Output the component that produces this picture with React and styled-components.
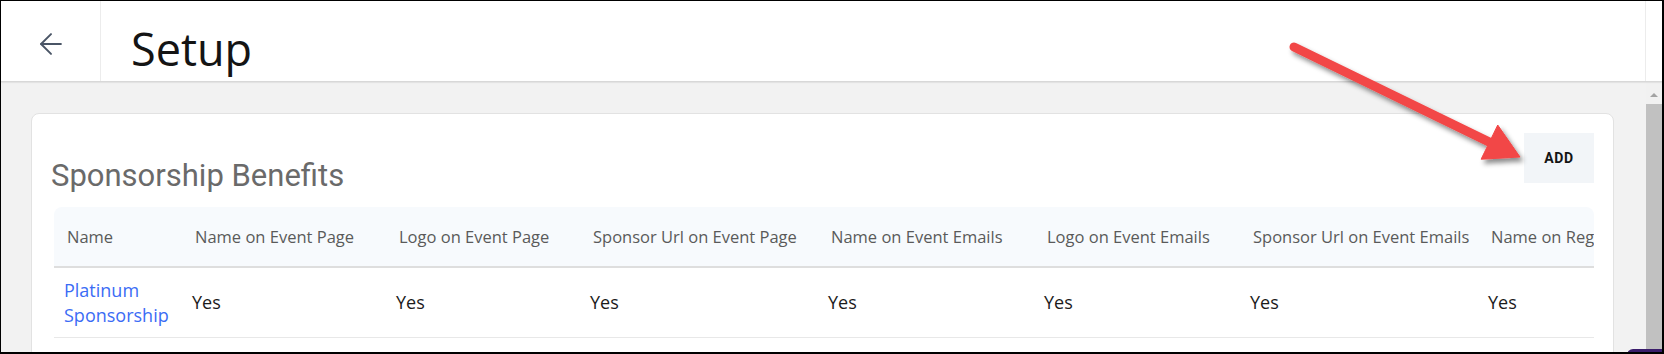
import React from 'react';
import styled, { createGlobalStyle } from 'styled-components';
import { ArrowLeft } from 'lucide-react';

const GlobalStyle = createGlobalStyle`
  html, body { margin: 0; padding: 0; background: #fff; }
  body { font-family: "Open Sans", "Noto Sans", sans-serif; }
  *, *::before, *::after { box-sizing: border-box; }
`;

const Frame = styled.div`
  position: relative;
  width: 1664px;
  height: 354px;
  border-style: solid;
  border-color: #000;
  border-width: 1px 2px 2px 1px;
  overflow: hidden;
  display: flex;
  flex-direction: column;
  background: #f2f2f2;
`;

const TopBar = styled.header`
  flex: none;
  height: 81px;
  display: flex;
  align-items: stretch;
  background: #fff;
  border-bottom: 1px solid #d8d8d8;
  box-shadow: 0 1px 1px rgba(0, 0, 0, 0.06);
  position: relative;
  z-index: 1;
`;

const BackCell = styled.button`
  flex: none;
  width: 100px;
  border: none;
  border-right: 1px solid #ececec;
  background: #fff;
  display: flex;
  align-items: center;
  justify-content: center;
  padding: 5px 0 0 0;
  color: #4a5566;
  cursor: pointer;
`;

const PageTitle = styled.h1`
  margin: 25px 0 0 30px;
  font-family: "Open Sans", sans-serif;
  font-weight: 400;
  font-size: 45px;
  line-height: 45px;
  color: #141414;
`;

const TopSpacer = styled.div`
  flex: 1;
  border-right: 1px solid #ececec;
`;

const TopEnd = styled.div`
  flex: none;
  width: 16px;
`;

const Main = styled.div`
  flex: 1;
  min-height: 0;
  display: flex;
`;

const Content = styled.main`
  flex: 1;
  min-width: 0;
  padding: 31px 32px 0 30px;
  overflow: hidden;
`;

const Card = styled.section`
  background: #fff;
  border: 1px solid #e2e2e2;
  border-radius: 8px;
  padding: 19px 19px 0 22px;
  min-height: 320px;
`;

const CardHeader = styled.div`
  display: flex;
  justify-content: space-between;
  align-items: flex-start;
  height: 59px;
`;

const CardTitle = styled.h2`
  margin: 25px 0 0 -3px;
  font-family: Roboto, "Noto Sans", sans-serif;
  font-weight: 400;
  font-size: 31px;
  line-height: 36px;
  color: #6a6a6a;
`;

const AddButton = styled.button`
  width: 70px;
  height: 50px;
  border: none;
  background: #f2f5f8;
  font-family: Roboto, "Noto Sans", sans-serif;
  font-weight: 700;
  font-size: 14px;
  letter-spacing: 0.7px;
  color: #141414;
  cursor: pointer;
`;

const TableWrap = styled.div`
  margin-top: 15px;
  overflow: hidden;
  border-radius: 8px 8px 0 0;
`;

const Grid = styled.div`
  display: grid;
  grid-template-columns: ${(p) => p.$cols.map((w) => `${w}px`).join(' ')};
  width: max-content;
`;

const HeadCell = styled.div`
  height: 61px;
  display: flex;
  align-items: center;
  padding: 0 8px 0 13px;
  background: #f7fafd;
  border-bottom: 2px solid #dedede;
  font-size: 16.5px;
  color: #5a5a5a;
  white-space: nowrap;
  overflow: hidden;
`;

const BodyCell = styled.div`
  height: 70px;
  display: flex;
  align-items: center;
  padding: 0 6px 0 10px;
  border-bottom: 1px solid #e8e8e8;
  font-size: 18px;
  line-height: 25px;
  color: #1b1b1b;
`;

const NameLink = styled.a`
  color: #3b6cf5;
  text-decoration: none;
`;

const Scrollbar = styled.div`
  flex: none;
  width: 16px;
  background: #f1f1f1;
  display: flex;
  flex-direction: column;
`;

const ScrollButton = styled.div`
  flex: none;
  height: 22px;
  display: flex;
  justify-content: center;
  padding-top: 11px;
  &::before {
    content: '';
    width: 0;
    height: 0;
    border-left: 4px solid transparent;
    border-right: 4px solid transparent;
    border-bottom: 4px solid #a3a3a3;
  }
`;

const ScrollThumb = styled.div`
  flex: 1;
  background: #c1c1c1;
`;

const Annotation = styled.svg`
  position: absolute;
  left: -1px;
  top: -1px;
  width: 1664px;
  height: 354px;
  pointer-events: none;
  z-index: 5;
`;

const ChatPeek = styled.div`
  position: absolute;
  left: 1626px;
  top: 348px;
  width: 40px;
  height: 6px;
  background: #3a1d6b;
  border-radius: 6px 0 0 0;
  z-index: 6;
`;

const columns = [
  { label: 'Name', width: 128 },
  { label: 'Name on Event Page', width: 204 },
  { label: 'Logo on Event Page', width: 194 },
  { label: 'Sponsor Url on Event Page', width: 238 },
  { label: 'Name on Event Emails', width: 216 },
  { label: 'Logo on Event Emails', width: 206 },
  { label: 'Sponsor Url on Event Emails', width: 238 },
  { label: 'Name on Registration Page', width: 240 },
];

const rows = [
  { name: 'Platinum Sponsorship', values: ['Yes', 'Yes', 'Yes', 'Yes', 'Yes', 'Yes', 'Yes'] },
];

export default function App() {
  const tip = [1520, 157];
  const start = [1294, 47];
  const dx = tip[0] - start[0];
  const dy = tip[1] - start[1];
  const len = Math.hypot(dx, dy);
  const ux = dx / len;
  const uy = dy / len;
  const headLen = 34;
  const headHalf = 19;
  const bx = tip[0] - headLen * ux;
  const by = tip[1] - headLen * uy;
  const c1 = [bx - headHalf * uy, by + headHalf * ux];
  const c2 = [bx + headHalf * uy, by - headHalf * ux];

  return (
    <>
      <GlobalStyle />
      <Frame>
        <TopBar>
          <BackCell aria-label="Back">
            <ArrowLeft size={34} strokeWidth={1.35} />
          </BackCell>
          <PageTitle>Setup</PageTitle>
          <TopSpacer />
          <TopEnd />
        </TopBar>
        <Main>
          <Content>
            <Card>
              <CardHeader>
                <CardTitle>Sponsorship Benefits</CardTitle>
                <AddButton>ADD</AddButton>
              </CardHeader>
              <TableWrap>
                <Grid $cols={columns.map((c) => c.width)}>
                  {columns.map((c) => (
                    <HeadCell key={c.label}>{c.label}</HeadCell>
                  ))}
                  {rows.map((r) => (
                    <React.Fragment key={r.name}>
                      <BodyCell>
                        <NameLink href="#">{r.name}</NameLink>
                      </BodyCell>
                      {r.values.map((v, i) => (
                        <BodyCell key={i}>{v}</BodyCell>
                      ))}
                    </React.Fragment>
                  ))}
                </Grid>
              </TableWrap>
            </Card>
          </Content>
          <Scrollbar>
            <ScrollButton />
            <ScrollThumb />
          </Scrollbar>
        </Main>
        <Annotation viewBox="0 0 1664 354">
          <defs>
            <filter id="arrowShadow" x="-20%" y="-20%" width="140%" height="140%">
              <feDropShadow dx="3" dy="4" stdDeviation="2.5" floodColor="#000" floodOpacity="0.45" />
            </filter>
          </defs>
          <g filter="url(#arrowShadow)" fill="#f24646" stroke="#f24646">
            <line
              x1={start[0]}
              y1={start[1]}
              x2={bx + 4 * ux}
              y2={by + 4 * uy}
              strokeWidth="9"
              strokeLinecap="round"
            />
            <polygon
              points={`${tip[0]},${tip[1]} ${c1[0]},${c1[1]} ${c2[0]},${c2[1]}`}
              strokeWidth="1"
              strokeLinejoin="round"
            />
          </g>
        </Annotation>
        <ChatPeek />
      </Frame>
    </>
  );
}
